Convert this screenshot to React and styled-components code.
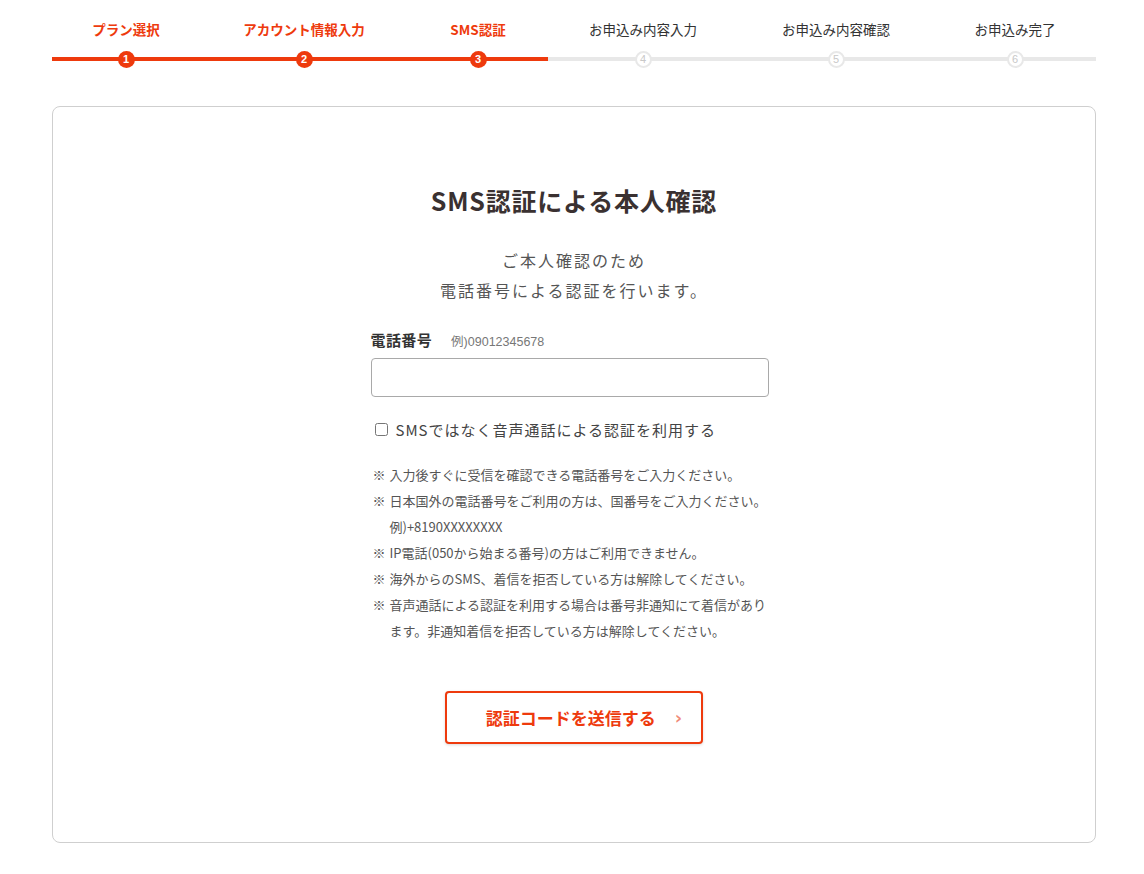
import React, { useState } from "react";
import styled, { createGlobalStyle } from "styled-components";

const RED = "#ee3a0d";

const steps = [
    { label: "プラン選択", w: 148 },
    { label: "アカウント情報入力", w: 208 },
    { label: "SMS認証", w: 140 },
    { label: "お申込み内容入力", w: 190 },
    { label: "お申込み内容確認", w: 196 },
    { label: "お申込み完了", w: 162 },
];
const CURRENT = 3;

const notes = [
    { text: "入力後すぐに受信を確認できる電話番号をご入力ください。" },
    { text: "日本国外の電話番号をご利用の方は、国番号をご入力ください。", sub: "例)+8190XXXXXXXX" },
    { text: "IP電話(050から始まる番号)の方はご利用できません。" },
    { text: "海外からのSMS、着信を拒否している方は解除してください。" },
    { text: "音声通話による認証を利用する場合は番号非通知にて着信があります。非通知着信を拒否している方は解除してください。" },
];

const App = () => {
    const [tel, setTel] = useState("");
    const [voice, setVoice] = useState(false);

    return (
        <>
            <GlobalStyle />
            <Page>
                {/* ステップ */}
                <Stepper>
                    {steps.map((s, i) => {
                        const n = i + 1;
                        const done = n <= CURRENT;
                        return (
                            <Step key={s.label} $w={s.w}>
                                <StepLabel $done={done}>{s.label}</StepLabel>
                                <StepTrack $done={done}>
                                    <StepCircle $done={done}>{n}</StepCircle>
                                </StepTrack>
                            </Step>
                        );
                    })}
                </Stepper>

                {/* カード */}
                <Card>
                    <Title>SMS認証による本人確認</Title>
                    <Lead>
                        ご本人確認のため
                        <br />
                        電話番号による認証を行います。
                    </Lead>

                    <Form>
                        <FieldHead>
                            <FieldLabel>電話番号</FieldLabel>
                            <FieldHint>例)09012345678</FieldHint>
                        </FieldHead>
                        <TelInput type="tel" value={tel} onChange={(e) => setTel(e.target.value)} />

                        <CheckRow>
                            <CheckBox type="checkbox" checked={voice} onChange={() => setVoice(!voice)} />
                            <span>SMSではなく音声通話による認証を利用する</span>
                        </CheckRow>

                        <Notes>
                            {notes.map((n) => (
                                <Note key={n.text}>
                                    <Mark>※</Mark>
                                    <div>
                                        {n.text}
                                        {n.sub && <div>{n.sub}</div>}
                                    </div>
                                </Note>
                            ))}
                        </Notes>
                    </Form>

                    <SendButton type="button">
                        <span>認証コードを送信する</span>
                        <Chevron>›</Chevron>
                    </SendButton>
                </Card>
            </Page>
        </>
    );
};

export default App;

const GlobalStyle = createGlobalStyle`
    body {
        margin: 0;
        background: #fff;
        font-family: "Noto Sans CJK JP", "Noto Sans", sans-serif;
        color: #333;
    }
`;

const Page = styled.div`
    width: 1044px;
    margin-left: 52px;
    padding: 18px 0 32px;
    box-sizing: border-box;
`;

///////////////////
// ステップ
const Stepper = styled.div`
    display: flex;
`;

const Step = styled.div`
    width: ${(p) => p.$w}px;
    display: flex;
    flex-direction: column;
    align-items: center;
`;

const StepLabel = styled.div`
    height: 24px;
    line-height: 22px;
    font-size: 13.5px;
    font-weight: ${(p) => (p.$done ? 700 : 400)};
    color: ${(p) => (p.$done ? RED : "#333")};
    white-space: nowrap;
`;

const StepTrack = styled.div`
    width: 100%;
    height: 4px;
    margin-top: 15px;
    background: ${(p) => (p.$done ? RED : "#e8e8e8")};
    display: flex;
    align-items: center;
    justify-content: center;
`;

const StepCircle = styled.div`
    width: 17px;
    height: 17px;
    flex-shrink: 0;
    border-radius: 50%;
    box-sizing: border-box;
    display: flex;
    align-items: center;
    justify-content: center;
    font-family: "Liberation Sans", Arial, sans-serif;
    font-size: 11px;
    font-weight: ${(p) => (p.$done ? 700 : 400)};
    background: ${(p) => (p.$done ? RED : "#fff")};
    border: ${(p) => (p.$done ? "none" : "2px solid #e8e8e8")};
    color: ${(p) => (p.$done ? "#fff" : "#c8c8c8")};
`;

///////////////////
// カード
const Card = styled.div`
    margin-top: 45px;
    height: 737px;
    box-sizing: border-box;
    border: 1px solid #cfcfcf;
    border-radius: 8px;
    display: flex;
    flex-direction: column;
    align-items: center;
    padding-top: 76px;
`;

const Title = styled.h1`
    margin: 0;
    font-size: 25px;
    letter-spacing: 0.8px;
    line-height: 34px;
    font-weight: 700;
    color: #3a3131;
`;

const Lead = styled.p`
    margin: 28px 0 0;
    text-align: center;
    font-size: 16px;
    letter-spacing: 2px;
    line-height: 30px;
    color: #555;
`;

const Form = styled.div`
    width: 398px;
    margin-top: 24px;
    margin-right: 9px;
`;

const FieldHead = styled.div`
    display: flex;
    align-items: baseline;
    gap: 19px;
`;

const FieldLabel = styled.span`
    font-size: 15px;
    letter-spacing: 0.4px;
    font-weight: 700;
    color: #333;
`;

const FieldHint = styled.span`
    font-family: "Liberation Sans", "Noto Sans CJK JP", sans-serif;
    font-size: 12.5px;
    color: #777;
`;

const TelInput = styled.input`
    display: block;
    width: 100%;
    height: 39px;
    margin-top: 8px;
    box-sizing: border-box;
    border: 1px solid #a9a9a9;
    border-radius: 4px;
    padding: 0 10px;
    font-size: 15px;
    outline: none;
`;

const CheckRow = styled.label`
    display: flex;
    align-items: center;
    gap: 8px;
    margin-top: 22px;
    padding-left: 4px;
    font-size: 15px;
    letter-spacing: 1px;
    color: #444;
    cursor: pointer;
`;

const CheckBox = styled.input`
    width: 13px;
    height: 13px;
    margin: 0;
`;

const Notes = styled.div`
    margin-top: 22px;
    padding-left: 2px;
    font-size: 13px;
    line-height: 26px;
    color: #555;
`;

const Note = styled.div`
    display: flex;
`;

const Mark = styled.span`
    flex-shrink: 0;
    width: 17px;
`;

///////////////////
// ボタン
const SendButton = styled.button`
    margin-top: 47px;
    margin-right: 1px;
    width: 258px;
    height: 53px;
    box-sizing: border-box;
    border: 2px solid ${RED};
    border-radius: 4px;
    background: #fff;
    box-shadow: 0 1px 3px rgba(0, 0, 0, 0.15);
    display: flex;
    align-items: center;
    justify-content: center;
    gap: 19px;
    padding-left: 27px;
    font-family: inherit;
    font-size: 17px;
    font-weight: 700;
    color: ${RED};
    cursor: pointer;
`;

const Chevron = styled.span`
    font-family: "DejaVu Sans", sans-serif;
    font-size: 18px;
    color: #f08a78;
    line-height: 1;
`;
